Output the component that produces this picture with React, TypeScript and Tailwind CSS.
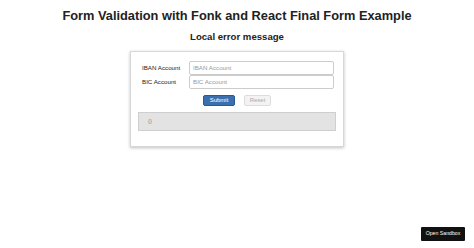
export default function App() {
  return (
    <div className="relative w-[474px] h-[248px] bg-white overflow-hidden" style={{ fontFamily: '"Liberation Sans", Arial, sans-serif' }}>
      <h1 className="text-center text-[12.8px] font-bold text-[#222] pt-[8px] leading-[16px]">
        Form Validation with Fonk and React Final Form Example
      </h1>
      <h2 className="text-center text-[9.6px] font-bold text-[#222] mt-[7px] leading-[12px]">Local error message</h2>
      <div className="ml-[130px] mt-[8px] w-[214px] h-[96px] border border-[#d8d8d8] shadow-[0_1px_3px_rgba(0,0,0,0.25)] bg-white pt-[9px] px-[7px]">
        <div className="flex flex-col">
          <div className="flex items-center">
            <label className="w-[47px] ml-[4px] text-[6.2px] text-[#222]">IBAN Account</label>
            <div className="w-[145px] h-[14px] border border-[#ccc] rounded-[2px] text-[6.2px] text-[#999] pl-[3px] flex items-center">IBAN Account</div>
          </div>
          <div className="flex items-center">
            <label className="w-[47px] ml-[4px] text-[6.2px] text-[#222]">BIC Account</label>
            <div className="w-[145px] h-[14px] border border-[#ccc] rounded-[2px] text-[6.2px] text-[#999] pl-[3px] flex items-center">BIC Account</div>
          </div>
        </div>
        <div className="flex gap-[9px] ml-[65px] mt-[6px]">
          <button className="w-[32px] h-[11px] rounded-[2px] bg-[#3a6fb0] text-white text-[6px] leading-[9px] border border-[#2a5a96]">Submit</button>
          <button className="w-[27px] h-[11px] rounded-[2px] bg-[#f3f3f3] text-[#aaa] text-[6px] leading-[9px] border border-[#ddd]">Reset</button>
        </div>
        <div className="mt-[6px] w-[198px] h-[19px] bg-[#e3e3e3] border border-[#cfcfcf] text-[6px] text-[#888] pl-[9px] flex items-center">{"{}"}</div>
      </div>
      <div className="absolute left-[421px] top-[227px] w-[44px] h-[14px] bg-[#111] text-white text-[5.2px] flex items-center justify-center rounded-[1px]">Open Sandbox</div>
    </div>
  );
}
